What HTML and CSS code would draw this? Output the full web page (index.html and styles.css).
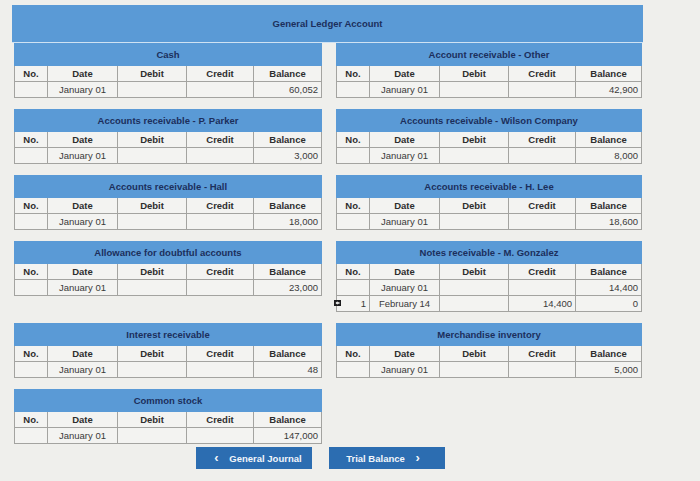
FILE: index.html
```html
<!DOCTYPE html>
<html>
<head>
    <meta charset="UTF-8">
    <title>General Ledger Account</title>
    <link rel="stylesheet" href="styles.css">
</head>
<body>
    <div class="ledger">
        <div class="ledger-head">General Ledger Account</div>

        <div class="accounts">
            <!-- Cash -->
            <table class="account">
                <colgroup><col class="c-no"><col class="c-date"><col class="c-debit"><col class="c-credit"><col class="c-bal"></colgroup>
                <thead>
                    <tr><th class="title" colspan="5">Cash</th></tr>
                    <tr><th>No.</th><th>Date</th><th>Debit</th><th>Credit</th><th>Balance</th></tr>
                </thead>
                <tbody>
                    <tr><td></td><td class="date">January 01</td><td></td><td></td><td class="num">60,052</td></tr>
                </tbody>
            </table>

            <!-- Account receivable - Other -->
            <table class="account">
                <colgroup><col class="c-no"><col class="c-date"><col class="c-debit"><col class="c-credit"><col class="c-bal"></colgroup>
                <thead>
                    <tr><th class="title" colspan="5">Account receivable - Other</th></tr>
                    <tr><th>No.</th><th>Date</th><th>Debit</th><th>Credit</th><th>Balance</th></tr>
                </thead>
                <tbody>
                    <tr><td></td><td class="date">January 01</td><td></td><td></td><td class="num">42,900</td></tr>
                </tbody>
            </table>

            <!-- Accounts receivable - P. Parker -->
            <table class="account">
                <colgroup><col class="c-no"><col class="c-date"><col class="c-debit"><col class="c-credit"><col class="c-bal"></colgroup>
                <thead>
                    <tr><th class="title" colspan="5">Accounts receivable - P. Parker</th></tr>
                    <tr><th>No.</th><th>Date</th><th>Debit</th><th>Credit</th><th>Balance</th></tr>
                </thead>
                <tbody>
                    <tr><td></td><td class="date">January 01</td><td></td><td></td><td class="num">3,000</td></tr>
                </tbody>
            </table>

            <!-- Accounts receivable - Wilson Company -->
            <table class="account">
                <colgroup><col class="c-no"><col class="c-date"><col class="c-debit"><col class="c-credit"><col class="c-bal"></colgroup>
                <thead>
                    <tr><th class="title" colspan="5">Accounts receivable - Wilson Company</th></tr>
                    <tr><th>No.</th><th>Date</th><th>Debit</th><th>Credit</th><th>Balance</th></tr>
                </thead>
                <tbody>
                    <tr><td></td><td class="date">January 01</td><td></td><td></td><td class="num">8,000</td></tr>
                </tbody>
            </table>

            <!-- Accounts receivable - Hall -->
            <table class="account">
                <colgroup><col class="c-no"><col class="c-date"><col class="c-debit"><col class="c-credit"><col class="c-bal"></colgroup>
                <thead>
                    <tr><th class="title" colspan="5">Accounts receivable - Hall</th></tr>
                    <tr><th>No.</th><th>Date</th><th>Debit</th><th>Credit</th><th>Balance</th></tr>
                </thead>
                <tbody>
                    <tr><td></td><td class="date">January 01</td><td></td><td></td><td class="num">18,000</td></tr>
                </tbody>
            </table>

            <!-- Accounts receivable - H. Lee -->
            <table class="account">
                <colgroup><col class="c-no"><col class="c-date"><col class="c-debit"><col class="c-credit"><col class="c-bal"></colgroup>
                <thead>
                    <tr><th class="title" colspan="5">Accounts receivable - H. Lee</th></tr>
                    <tr><th>No.</th><th>Date</th><th>Debit</th><th>Credit</th><th>Balance</th></tr>
                </thead>
                <tbody>
                    <tr><td></td><td class="date">January 01</td><td></td><td></td><td class="num">18,600</td></tr>
                </tbody>
            </table>

            <!-- Allowance for doubtful accounts -->
            <table class="account">
                <colgroup><col class="c-no"><col class="c-date"><col class="c-debit"><col class="c-credit"><col class="c-bal"></colgroup>
                <thead>
                    <tr><th class="title" colspan="5">Allowance for doubtful accounts</th></tr>
                    <tr><th>No.</th><th>Date</th><th>Debit</th><th>Credit</th><th>Balance</th></tr>
                </thead>
                <tbody>
                    <tr><td></td><td class="date">January 01</td><td></td><td></td><td class="num">23,000</td></tr>
                </tbody>
            </table>

            <!-- Notes receivable - M. Gonzalez -->
            <table class="account">
                <colgroup><col class="c-no"><col class="c-date"><col class="c-debit"><col class="c-credit"><col class="c-bal"></colgroup>
                <thead>
                    <tr><th class="title" colspan="5">Notes receivable - M. Gonzalez</th></tr>
                    <tr><th>No.</th><th>Date</th><th>Debit</th><th>Credit</th><th>Balance</th></tr>
                </thead>
                <tbody>
                    <tr><td></td><td class="date">January 01</td><td></td><td></td><td class="num">14,400</td></tr>
                    <tr>
                        <td class="num ref">
                            <span class="ref-icon">
                                <svg width="7" height="6" viewBox="0 0 7 6"><rect width="7" height="6" fill="#1d1d1f"/><path d="M1.5 3 L3.5 1.2 L3.5 2.2 L5.5 2.2 L5.5 3.8 L3.5 3.8 L3.5 4.8 Z" fill="#fff"/></svg>
                            </span>1
                        </td>
                        <td class="date">February 14</td><td></td><td class="num">14,400</td><td class="num">0</td>
                    </tr>
                </tbody>
            </table>

            <!-- Interest receivable -->
            <table class="account">
                <colgroup><col class="c-no"><col class="c-date"><col class="c-debit"><col class="c-credit"><col class="c-bal"></colgroup>
                <thead>
                    <tr><th class="title" colspan="5">Interest receivable</th></tr>
                    <tr><th>No.</th><th>Date</th><th>Debit</th><th>Credit</th><th>Balance</th></tr>
                </thead>
                <tbody>
                    <tr><td></td><td class="date">January 01</td><td></td><td></td><td class="num">48</td></tr>
                </tbody>
            </table>

            <!-- Merchandise inventory -->
            <table class="account">
                <colgroup><col class="c-no"><col class="c-date"><col class="c-debit"><col class="c-credit"><col class="c-bal"></colgroup>
                <thead>
                    <tr><th class="title" colspan="5">Merchandise inventory</th></tr>
                    <tr><th>No.</th><th>Date</th><th>Debit</th><th>Credit</th><th>Balance</th></tr>
                </thead>
                <tbody>
                    <tr><td></td><td class="date">January 01</td><td></td><td></td><td class="num">5,000</td></tr>
                </tbody>
            </table>

            <!-- Common stock -->
            <table class="account">
                <colgroup><col class="c-no"><col class="c-date"><col class="c-debit"><col class="c-credit"><col class="c-bal"></colgroup>
                <thead>
                    <tr><th class="title" colspan="5">Common stock</th></tr>
                    <tr><th>No.</th><th>Date</th><th>Debit</th><th>Credit</th><th>Balance</th></tr>
                </thead>
                <tbody>
                    <tr><td></td><td class="date">January 01</td><td></td><td></td><td class="num">147,000</td></tr>
                </tbody>
            </table>
        </div>

        <div class="nav-buttons">
            <a class="nav-btn" href="#"><span class="arrow">&lsaquo;</span> General Journal</a>
            <a class="nav-btn" href="#">Trial Balance <span class="arrow">&rsaquo;</span></a>
        </div>
    </div>
</body>
</html>
```

FILE: styles.css
```css
:root {
    --page-color: #efefec;
    --head-color: #5a9ad6;
    --title-text: #1c2f5c;
    --cell-color: #f3f3f1;
    --border-color: #a3a3a0;
    --text-color: #3a3a3a;
    --button-color: #2c6db1;
}

body {
    font-family: "Liberation Sans", Arial, sans-serif;
    margin: 0;
    padding: 5px 0 0 0;
    background-color: var(--page-color);
}

.ledger {
    width: 631px;
    margin-left: 12px;
}

.ledger-head {
    height: 37px;
    line-height: 38px;
    background-color: var(--head-color);
    color: var(--title-text);
    font-size: 9.5px;
    font-weight: bold;
    text-align: center;
    border-bottom: 1px solid #cfe2f3;
}

.accounts {
    display: grid;
    grid-template-columns: 308px 306px;
    column-gap: 14px;
    row-gap: 11px;
    align-items: start;
    padding: 0 0 0 2px;
}

table.account {
    border-collapse: collapse;
    table-layout: fixed;
    width: 100%;
    font-size: 9.5px;
    color: var(--text-color);
}

.c-no { width: 33px; }
.c-date { width: 70px; }
.c-debit { width: 69px; }
.c-credit { width: 67px; }

th, td {
    border: 1px solid var(--border-color);
    padding: 0 3px;
    line-height: 12px;
    background-color: var(--cell-color);
}

th {
    height: 15px;
    font-weight: bold;
    color: #2e2e2e;
    text-align: center;
}

th.title {
    height: 21px;
    background-color: var(--head-color);
    color: var(--title-text);
    font-size: 9.5px;
    border-color: var(--head-color);
}

td {
    height: 15px;
}

td.date {
    text-align: center;
}

td.num {
    text-align: right;
}

td.ref {
    position: relative;
}

.ref-icon {
    position: absolute;
    left: -3px;
    top: 4px;
    line-height: 0;
}

.nav-buttons {
    display: flex;
    justify-content: center;
    gap: 17px;
    margin-top: 3px;
    padding-right: 14px;
}

.nav-btn {
    display: block;
    width: 116px;
    height: 22px;
    line-height: 22px;
    background-color: var(--button-color);
    color: #f2f6fb;
    font-size: 9.5px;
    font-weight: bold;
    text-align: center;
    text-decoration: none;
}

.nav-btn .arrow {
    font-size: 13px;
    margin: 0 8px;
}
```
